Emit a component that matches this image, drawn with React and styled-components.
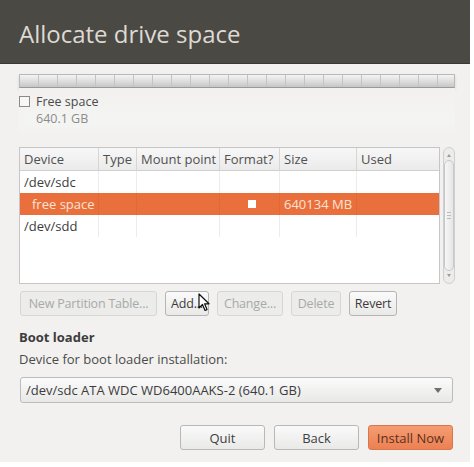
import React from "react";
import styled, { createGlobalStyle } from "styled-components";

const GlobalStyle = createGlobalStyle`
  html, body {
    margin: 0;
    padding: 0;
    background: #ffffff;
  }
  body {
    font-family: "Open Sans", "DejaVu Sans", sans-serif;
    font-size: 13px;
    color: #3c3c3c;
  }
`;

const Window = styled.div`
  width: 470px;
  height: 462px;
  background: #f2f1f0;
  display: flex;
  flex-direction: column;
`;

const Header = styled.div`
  height: 64px;
  background: #4b4944;
  border-bottom: 1px solid #3a3834;
  box-sizing: border-box;
  display: flex;
  align-items: center;
  padding: 3px 0 0 19px;
`;

const Title = styled.h1`
  margin: 0;
  font-size: 24px;
  font-weight: 400;
  color: #dedad3;
`;

const Content = styled.div`
  padding: 10px 15px 0 19px;
  display: flex;
  flex-direction: column;
`;

const PartitionBar = styled.div`
  height: 14px;
  width: 436px;
  box-sizing: border-box;
  border: 1px solid #b9b9b9;
  border-bottom-color: #9a9a9a;
  background:
    repeating-linear-gradient(
      to right,
      transparent 0,
      transparent 18px,
      #c4c4c4 18px,
      #c4c4c4 19px
    ),
    linear-gradient(#f4f4f4, #dcdcdc 55%, #c6c6c6);
  box-shadow: 0 2px 3px rgba(0, 0, 0, 0.12);
`;

const Legend = styled.div`
  width: 436px;
  height: 49px;
  box-sizing: border-box;
  padding-top: 5px;
  background: linear-gradient(#f2f1f0, #f4f4f3 70%, #f2f1f0);
  display: flex;
  gap: 6px;
`;

const LegendBox = styled.div`
  width: 11px;
  height: 11px;
  box-sizing: border-box;
  border: 1px solid #8a8a8a;
  background: #f7f7f7;
  margin-top: 3px;
`;

const LegendText = styled.div`
  display: flex;
  flex-direction: column;
  font-size: 12.5px;
  line-height: 17px;
`;

const LegendName = styled.span`
  color: #4a4a4a;
`;

const LegendSize = styled.span`
  color: #8c8c8c;
`;

const TableRow = styled.div`
  margin-top: 10px;
  display: flex;
  gap: 3px;
  height: 137px;
`;

const TableBox = styled.div`
  width: 421px;
  box-sizing: border-box;
  border: 1px solid #c6c6c6;
  background: #ffffff;
  overflow: hidden;
`;

const Grid = styled.div`
  display: grid;
  grid-template-columns: 79px 38px 83px 60px 77px 1fr;
`;

const HeadCell = styled.div`
  height: 23px;
  box-sizing: border-box;
  padding-left: 4px;
  display: flex;
  align-items: center;
  white-space: nowrap;
  color: #505050;
  background: linear-gradient(#f7f7f7, #ebebeb);
  border-bottom: 1px solid #cfcfcf;
  border-right: ${(p) => (p.$last ? "none" : "1px solid #d6d6d6")};
`;

const Cell = styled.div`
  height: 22px;
  box-sizing: border-box;
  padding-left: ${(p) => (p.$indent ? "12px" : "4px")};
  display: flex;
  align-items: center;
  justify-content: ${(p) => (p.$center ? "center" : "flex-start")};
  white-space: nowrap;
  color: ${(p) => (p.$selected ? "#fbe3d6" : "#3c3c3c")};
  background: ${(p) => (p.$selected ? "#e9703c" : "transparent")};
  border-right: ${(p) =>
    p.$last || p.$blank
      ? "1px solid transparent"
      : p.$selected
      ? "1px solid #e16a36"
      : "1px solid #ececec"};
`;

const CellCheck = styled.span`
  width: 8px;
  height: 8px;
  background: #ffffff;
`;

const Scrollbar = styled.div`
  width: 12px;
  box-sizing: border-box;
  border: 1px solid #cfcfcf;
  border-radius: 6px;
  background: #ececeb;
  display: flex;
  flex-direction: column;
  align-items: center;
  padding: 3px 0;
`;

const Arrow = styled.div`
  width: 0;
  height: 0;
  border-left: 2px solid transparent;
  border-right: 2px solid transparent;
  ${(p) =>
    p.$down ? "border-top: 3px solid #9a9a9a;" : "border-bottom: 3px solid #9a9a9a;"}
  margin: 3px 0;
`;

const Thumb = styled.div`
  flex: 1;
  width: 10px;
  box-sizing: border-box;
  border: 1px solid #c8c8c8;
  border-radius: 5px;
  background: linear-gradient(to right, #f6f6f6, #e6e6e6);
  display: flex;
  flex-direction: column;
  align-items: center;
  justify-content: center;
  gap: 2px;
`;

const Grip = styled.span`
  width: 4px;
  height: 1px;
  background: #bdbdbd;
`;

const ButtonRow = styled.div`
  margin-top: 7px;
  display: flex;
  gap: 8px;
  padding-left: 1px;
  position: relative;
`;

const Button = styled.button`
  height: 25px;
  width: ${(p) => p.$width}px;
  padding: 0;
  box-sizing: border-box;
  font-family: inherit;
  font-size: 12.5px;
  letter-spacing: -0.2px;
  border-radius: 3px;
  border: 1px solid ${(p) => (p.$disabled ? "#d6d6d6" : "#b5b5b5")};
  color: ${(p) => (p.$disabled ? "#a9a9a9" : "#3c3c3c")};
  background: ${(p) =>
    p.$disabled ? "#ececeb" : "linear-gradient(#fafafa, #e9e9e8)"};
  display: flex;
  align-items: center;
  justify-content: center;
  white-space: nowrap;
  overflow: hidden;
`;

const Pointer = styled.svg`
  position: absolute;
  left: 179px;
  top: 2px;
`;

const SectionTitle = styled.div`
  margin-top: 13px;
  font-weight: 700;
  color: #3c3c3c;
  line-height: 16px;
`;

const FieldLabel = styled.div`
  margin-top: 6px;
  color: #4a4a4a;
  line-height: 16px;
`;

const Select = styled.div`
  margin-top: 10px;
  margin-left: 1px;
  width: 433px;
  height: 26px;
  box-sizing: border-box;
  border: 1px solid #bcbcbc;
  border-radius: 3px;
  background: linear-gradient(#fbfbfb, #e8e8e7);
  display: flex;
  align-items: center;
  justify-content: space-between;
  padding: 0 10px 0 5px;
  color: #3c3c3c;
`;

const Caret = styled.span`
  width: 0;
  height: 0;
  border-left: 4px solid transparent;
  border-right: 4px solid transparent;
  border-top: 5px solid #707070;
`;

const Footer = styled.div`
  margin-top: 22px;
  display: flex;
  justify-content: flex-end;
  gap: 9px;
  padding-right: 2px;
`;

const FooterButton = styled.button`
  width: 85px;
  height: 25px;
  font-family: inherit;
  font-size: 13px;
  border-radius: 3px;
  border: 1px solid ${(p) => (p.$primary ? "#d9774a" : "#b8b8b8")};
  color: ${(p) => (p.$primary ? "#5a3020" : "#404040")};
  background: ${(p) =>
    p.$primary
      ? "linear-gradient(#f59d72, #ec8053)"
      : "linear-gradient(#fafafa, #e9e9e8)"};
  padding: 0;
`;

const columns = ["Device", "Type", "Mount point", "Format?", "Size", "Used"];

const rows = [
  { cells: ["/dev/sdc", "", "", "", "", ""] },
  { cells: ["free space", "", "", "check", "640134 MB", ""], selected: true },
  { cells: ["/dev/sdd", "", "", "", "", ""] },
  { cells: ["", "", "", "", "", ""], blank: true },
  { cells: ["", "", "", "", "", ""], blank: true },
];

export default function App() {
  return (
    <>
      <GlobalStyle />
      <Window>
        <Header>
          <Title>Allocate drive space</Title>
        </Header>
        <Content>
          <PartitionBar />
          <Legend>
            <LegendBox />
            <LegendText>
              <LegendName>Free space</LegendName>
              <LegendSize>640.1 GB</LegendSize>
            </LegendText>
          </Legend>

          <TableRow>
            <TableBox>
              <Grid>
                {columns.map((c, i) => (
                  <HeadCell key={c} $last={i === columns.length - 1}>
                    {c}
                  </HeadCell>
                ))}
                {rows.map((r, ri) =>
                  r.cells.map((c, ci) => (
                    <Cell
                      key={ri + "-" + ci}
                      $selected={r.selected}
                      $blank={r.blank}
                      $indent={r.selected && ci === 0}
                      $center={c === "check"}
                      $last={ci === 5}
                    >
                      {c === "check" ? <CellCheck /> : c}
                    </Cell>
                  ))
                )}
              </Grid>
            </TableBox>
            <Scrollbar>
              <Arrow />
              <Thumb>
                <Grip />
                <Grip />
                <Grip />
              </Thumb>
              <Arrow $down />
            </Scrollbar>
          </TableRow>

          <ButtonRow>
            <Button $disabled $width={137}>New Partition Table...</Button>
            <Button $width={44}>Add...</Button>
            <Button $disabled $width={66}>Change...</Button>
            <Button $disabled $width={50}>Delete</Button>
            <Button $width={48}>Revert</Button>
            <Pointer width="12" height="19" viewBox="0 0 12 19">
              <path
                d="M1 1 L1 15 L4.5 11.5 L7 17.5 L9 16.6 L6.6 10.8 L11 10.8 Z"
                fill="#ffffff"
                stroke="#111111"
                strokeWidth="1.2"
                strokeLinejoin="round"
              />
            </Pointer>
          </ButtonRow>

          <SectionTitle>Boot loader</SectionTitle>
          <FieldLabel>Device for boot loader installation:</FieldLabel>
          <Select>
            <span>/dev/sdc ATA WDC WD6400AAKS-2 (640.1 GB)</span>
            <Caret />
          </Select>

          <Footer>
            <FooterButton>Quit</FooterButton>
            <FooterButton>Back</FooterButton>
            <FooterButton $primary>Install Now</FooterButton>
          </Footer>
        </Content>
      </Window>
    </>
  );
}
